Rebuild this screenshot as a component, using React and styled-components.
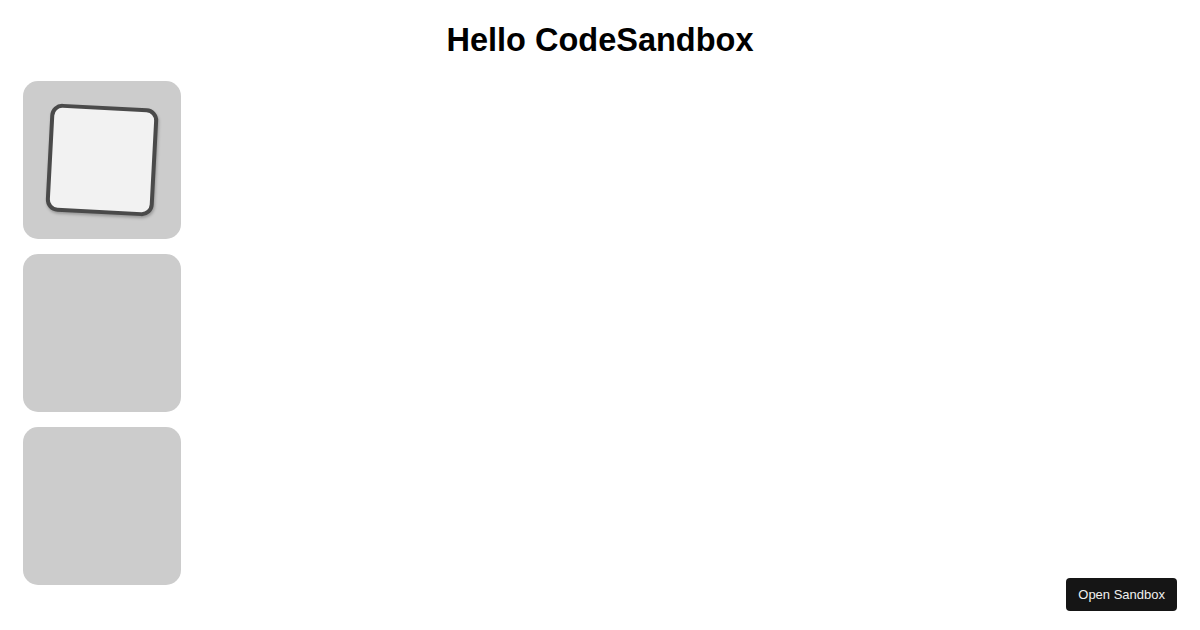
import styled, { createGlobalStyle } from "styled-components";

const GlobalStyle = createGlobalStyle`
  body {
    margin: 0;
    background: #ffffff;
    font-family: "Liberation Sans", Arial, sans-serif;
  }
`;

const Page = styled.div`
  padding: 0 23px;
`;

const Title = styled.h1`
  margin: 0;
  padding: 22px 0 22px;
  text-align: center;
  font-size: 32.5px;
  line-height: 37px;
  font-weight: 700;
  color: #000;
`;

const CardList = styled.div`
  display: flex;
  flex-direction: column;
  gap: 15px;
`;

const Card = styled.div`
  width: 158px;
  height: 158px;
  border-radius: 15px;
  background: #cccccc;
  display: flex;
  align-items: center;
  justify-content: center;
`;

const Tile = styled.div`
  width: 100px;
  height: 100px;
  border: 4px solid #4a4a4a;
  border-radius: 12px;
  background: #f2f2f2;
  transform: rotate(${(p) => p.$angle}deg);
  box-shadow: 1px 2px 3px rgba(0, 0, 0, 0.25);
`;

const OpenButton = styled.button`
  position: fixed;
  right: 23px;
  bottom: 19px;
  height: 33px;
  padding: 0 12px;
  border: none;
  border-radius: 4px;
  background: #151515;
  color: #f0f0f0;
  font-family: "Liberation Sans", Arial, sans-serif;
  font-size: 13px;
  cursor: pointer;
`;

const cards = [{ tile: true }, { tile: false }, { tile: false }];

export default function App() {
  return (
    <Page>
      <GlobalStyle />
      <Title>Hello CodeSandbox</Title>
      <CardList>
        {cards.map((card, i) => (
          <Card key={i}>{card.tile && <Tile $angle={3} />}</Card>
        ))}
      </CardList>
      <OpenButton>Open Sandbox</OpenButton>
    </Page>
  );
}
